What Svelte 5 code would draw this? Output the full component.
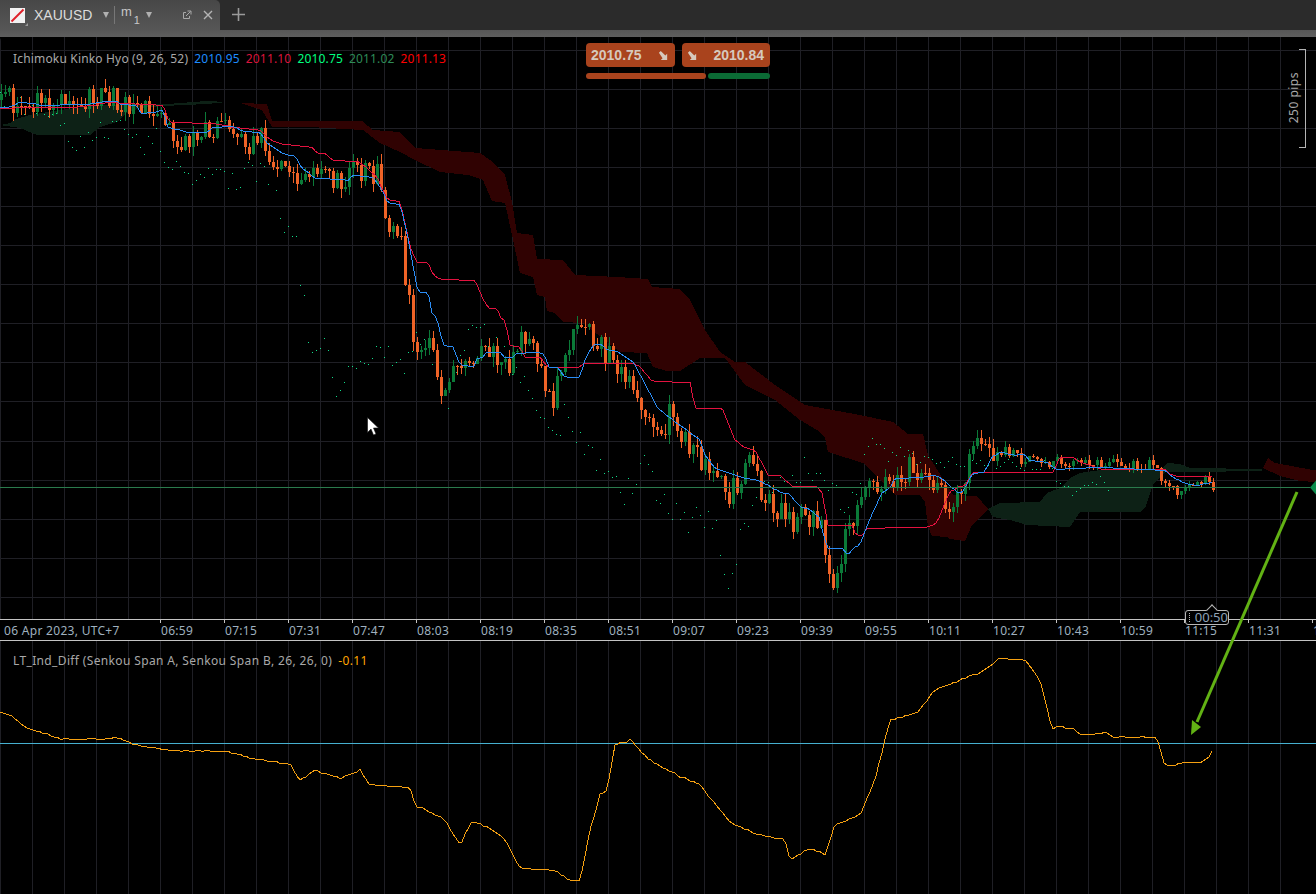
<script>
  // all chart coordinates are page pixels, panels shift them with a translate
  const CHART_TOP = 37;
  const SUB_TOP = 641;

  const closeKeys = [[0,100],[40,105],[70,103],[100,98],[130,105],[165,115],[170,148],[190,140],[200,125],[225,125],[245,145],[262,130],[265,160],[285,172],[318,180],[345,175],[375,172],[382,205],[390,235],[400,245],[408,300],[413,345],[430,350],[440,385],[455,360],[475,365],[490,345],[505,370],[520,330],[540,370],[552,400],[565,350],[585,325],[600,350],[620,365],[640,410],[655,440],[670,410],[690,455],[710,470],[730,495],[745,460],[765,500],[785,520],[820,515],[827,570],[832,590],[845,530],[865,495],[890,480],[910,465],[930,480],[950,505],[965,470],[975,445],[1000,452],[1030,462],[1060,462],[1100,465],[1150,465],[1175,490],[1195,488],[1205,475],[1212,488]];

  const kijun = [[0,108],[13,108],[20,107],[77,107],[100,104],[107,102],[163,105],[166,113],[169,122],[213,123],[233,127],[260,130],[267,137],[277,143],[312,147],[317,153],[325,153],[332,160],[357,161],[367,168],[377,177],[383,190],[388,200],[399,201],[403,213],[410,247],[417,262],[428,262],[433,275],[440,279],[475,280],[482,297],[488,308],[497,308],[501,318],[505,320],[510,345],[520,347],[525,357],[540,357],[548,367],[580,367],[584,363],[633,363],[640,367],[652,381],[690,382],[695,408],[722,408],[735,440],[745,448],[755,450],[768,475],[780,475],[792,486],[817,486],[822,493],[828,525],[852,525],[855,533],[862,537],[867,528],[908,527],[928,527],[937,523],[943,507],[950,492],[960,486],[965,486],[973,472],[1053,472],[1060,457],[1073,457],[1080,462],[1100,469],[1165,469],[1170,474],[1178,476],[1213,476]];

  const tenkan = [[0,107],[10,107],[20,102],[33,103],[40,105],[53,105],[67,104],[87,104],[107,101],[118,101],[120,104],[137,105],[140,113],[157,112],[163,110],[168,127],[187,132],[208,132],[213,127],[233,126],[243,131],[260,132],[267,143],[283,154],[295,156],[302,168],[315,178],[342,179],[348,181],[353,175],[373,177],[382,190],[388,203],[400,204],[407,233],[417,287],[420,292],[428,292],[432,313],[437,318],[443,345],[453,347],[460,365],[474,366],[477,359],[482,358],[487,352],[500,352],[504,357],[513,357],[517,353],[538,352],[545,355],[548,367],[557,367],[565,377],[580,377],[584,362],[593,345],[600,344],[608,350],[617,351],[633,362],[643,380],[657,407],[670,418],[680,425],[700,440],[705,455],[715,468],[735,475],[745,478],[758,480],[780,492],[790,494],[800,507],[808,508],[820,518],[823,535],[828,548],[842,548],[848,555],[855,547],[860,545],[868,523],[882,493],[890,488],[895,478],[923,477],[933,475],[940,477],[957,492],[962,493],[973,473],[985,472],[992,456],[1003,452],[1013,455],[1025,454],[1028,460],[1047,462],[1055,469],[1100,467],[1165,470],[1172,477],[1185,483],[1198,486],[1205,483],[1213,482]];

  const redCloud = [[240,103],[267,104],[272,121],[362,121],[373,130],[400,132],[415,148],[480,153],[490,160],[505,175],[512,202],[517,233],[533,235],[537,259],[563,260],[575,275],[617,277],[648,279],[652,287],[680,289],[690,300],[705,330],[720,352],[735,362],[745,362],[775,385],[805,405],[860,415],[893,422],[908,434],[923,434],[928,455],[953,495],[977,496],[988,509],[972,525],[965,541],[950,539],[947,537],[932,536],[928,527],[925,502],[920,495],[895,495],[863,463],[847,458],[828,452],[825,437],[817,430],[800,420],[775,400],[745,385],[725,358],[700,358],[680,371],[667,371],[653,367],[647,353],[620,352],[607,342],[583,323],[563,322],[555,313],[547,311],[545,297],[537,295],[533,277],[520,273],[512,235],[505,203],[492,201],[483,180],[468,175],[440,172],[415,160],[400,152],[380,143],[363,130],[310,127],[272,127],[262,110]];
  const redTail = [[1263,468],[1268,458],[1275,463],[1313,470],[1316,470],[1316,482],[1300,481],[1280,476]];
  const greenCloudA = [[0,125],[10,123],[13,120],[30,115],[60,110],[100,105],[167,104],[207,101],[227,102],[207,104],[163,106],[140,108],[127,113],[117,122],[100,127],[90,135],[37,135],[20,128]];
  const greenCloudB = [[988,509],[1000,503],[1040,502],[1047,493],[1060,488],[1072,477],[1080,473],[1100,470],[1160,470],[1167,463],[1180,464],[1190,468],[1262,469],[1262,471],[1190,472],[1165,472],[1153,485],[1145,508],[1140,512],[1080,512],[1070,527],[1027,525],[1010,520],[993,517]];

  const diff = [[0,712],[10,715],[25,728],[45,733],[62,739],[120,738],[135,745],[170,750],[230,752],[250,758],[290,764],[300,780],[315,770],[340,778],[360,770],[370,785],[410,787],[415,805],[445,820],[460,845],[472,820],[490,828],[505,840],[520,868],[555,870],[570,880],[580,880],[590,830],[600,795],[607,790],[615,745],[630,740],[650,760],[670,772],[700,785],[730,822],[760,835],[785,840],[790,860],[810,848],[825,855],[835,825],[860,815],[875,780],[890,720],[918,712],[935,690],[960,680],[985,670],[1000,658],[1025,660],[1040,680],[1050,720],[1053,729],[1061,726],[1065,728],[1074,729],[1080,734],[1087,735],[1098,734],[1104,732],[1112,737],[1147,737],[1157,738],[1164,763],[1175,767],[1180,762],[1198,762],[1201,764],[1204,759],[1208,759],[1213,750]];

  const timeLabels = ['06:59','07:15','07:31','07:47','08:03','08:19','08:35','08:51','09:07','09:23','09:39','09:55','10:11','10:27','10:43','10:59','11:15','11:31','11:47'];

  const pts = (list) => list.map((p) => p.join(',')).join(' ');

  function valueAt(keys, x) {
    for (let i = 1; i < keys.length; i++) {
      if (x <= keys[i][0]) {
        const [x0, y0] = keys[i - 1];
        const [x1, y1] = keys[i];
        return y0 + ((y1 - y0) * (x - x0)) / (x1 - x0);
      }
    }
    return keys[keys.length - 1][1];
  }

  let seed = 41;
  function rnd() {
    seed = (seed * 1664525 + 1013904223) % 4294967296;
    return seed / 4294967296;
  }

  // the indicators are stepped in the terminal, resample them onto whole pixels
  function stepped(keys, jitter = 0) {
    const out = [];
    const last = keys[keys.length - 1][0];
    for (let x = keys[0][0]; x <= last; x += 3) {
      out.push([x, Math.round(valueAt(keys, x) + (rnd() - 0.5) * jitter)]);
    }
    return out;
  }

  const candles = [];
  let prev = closeKeys[0][1];
  for (let x = 0; x <= 1212; x += 4) {
    const calm = x > 1010;
    const noise = calm ? 12 : 26;
    const close = Math.round(valueAt(closeKeys, x) + (rnd() - 0.5) * noise);
    const top = Math.min(prev, close);
    const bottom = Math.max(prev, close);
    candles.push({
      x,
      close,
      up: close < prev,
      top,
      height: Math.max(bottom - top, 1),
      high: top - Math.round(rnd() * (calm ? 5 : 10)),
      low: bottom + Math.round(rnd() * (calm ? 5 : 10))
    });
    prev = close;
  }

  const hLines = Array.from({ length: 15 }, (_, i) => Math.round(49.5 + i * 39.1));
  const vLines = Array.from({ length: 41 }, (_, i) => i * 32);
</script>

<div class="page">
  <header class="tabbar">
    <div class="tab">
      <svg class="symbol" width="18" height="18" viewBox="0 0 18 18">
        <rect x="0" y="0" width="15" height="15" fill="#f2f2f2" />
        <path d="M1.5 13.5 L13.5 1.5" stroke="#e0202a" stroke-width="2" />
        <path d="M18 15v3h-3z" fill="#9a9a9a" />
      </svg>
      <span class="symbol-name">XAUUSD</span>
      <span class="caret"></span>
      <span class="tab-sep"></span>
      <span class="period">m<sub>1</sub></span>
      <span class="caret period-caret"></span>
      <svg class="popout" width="10" height="10" viewBox="0 0 10 10" fill="none" stroke="#a8a8a8">
        <path d="M4 2.5H1.5v6h6V6" />
        <path d="M4 6 8.5 1.5M5.5 1h3.5v3.5" />
      </svg>
      <svg class="close" width="10" height="10" viewBox="0 0 10 10" stroke="#b4b4b4" stroke-width="1.4">
        <path d="M1 1l8 8M9 1l-8 8" />
      </svg>
    </div>
    <svg class="add" width="15" height="15" viewBox="0 0 15 15" stroke="#9a9a9a" stroke-width="1.6">
      <path d="M7.5 1v13M1 7.5h13" />
    </svg>
  </header>
  <div class="strip"></div>

  <section class="chart">
    <svg class="canvas" viewBox="0 {CHART_TOP} 1316 582">
      <g shape-rendering="crispEdges" stroke="#1f1f25">
        {#each hLines as y}
          <line x1="0" x2="1316" y1={y + 0.5} y2={y + 0.5} />
        {/each}
        {#each vLines as x}
          <line x1={x + 0.5} x2={x + 0.5} y1={CHART_TOP} y2="619" />
        {/each}
      </g>

      <polygon points={pts(greenCloudA)} fill="#0d2116" shape-rendering="crispEdges" />
      <polygon points={pts(greenCloudB)} fill="#0d2116" shape-rendering="crispEdges" />
      <polygon points={pts(redCloud)} fill="#300202" shape-rendering="crispEdges" />
      <polygon points={pts(redTail)} fill="#300202" shape-rendering="crispEdges" />

      <g fill="#0fe08c">
        {#each candles as c}
          <rect x={c.x - 104} y={c.close} width="1" height="1" />
        {/each}
      </g>

      <g shape-rendering="crispEdges">
        {#each candles as c}
          <rect x={c.x + 1} y={c.high} width="1" height={c.low - c.high} fill={c.up ? '#0b7a38' : '#ef6327'} />
          <rect x={c.x} y={c.top} width="3" height={c.height} fill={c.up ? '#0b7a38' : '#ef6327'} />
        {/each}
      </g>

      <polyline points={pts(stepped(kijun))} fill="none" stroke="#e2123f" shape-rendering="crispEdges" />
      <polyline points={pts(stepped(tenkan))} fill="none" stroke="#2b8df5" shape-rendering="crispEdges" />

      <line x1="0" x2="1310" y1="487.5" y2="487.5" stroke="#2a7a4c" shape-rendering="crispEdges" />
      <path d="M1310 487.5l6-7v14z" fill="#0b8a4b" />
    </svg>

    <div class="legend">
      <span>Ichimoku Kinko Hyo (9, 26, 52)</span>
      <span class="blue">2010.95</span>
      <span class="crimson">2011.10</span>
      <span class="mint">2010.75</span>
      <span class="green">2011.02</span>
      <span class="red">2011.13</span>
    </div>

    <div class="quote">
      <div class="quote-buttons">
        <div class="quote-btn">
          <span>2010.75</span>
          <svg width="11" height="11" viewBox="0 0 12 12" fill="#d6c9bd"><path d="M1 3l2-2 5 5 2-2v7H3l2-2z" /></svg>
        </div>
        <div class="quote-btn">
          <svg width="11" height="11" viewBox="0 0 12 12" fill="#d6c9bd"><path d="M1 3l2-2 5 5 2-2v7H3l2-2z" /></svg>
          <span>2010.84</span>
        </div>
      </div>
      <div class="quote-bars">
        <span class="bar sell"></span>
        <span class="bar buy"></span>
      </div>
    </div>

    <div class="pips">
      <span class="pips-label">250 pips</span>
      <span class="pips-bracket"></span>
    </div>
  </section>

  <div class="axis">
    <div class="axis-date">06 Apr 2023, UTC+7</div>
    {#each timeLabels as t}
      <div class="axis-cell">{t}</div>
    {/each}
    <div class="countdown">
      <span class="grip"></span>
      <span class="countdown-time">00:50</span>
    </div>
  </div>

  <section class="sub">
    <svg class="canvas" viewBox="0 {SUB_TOP} 1316 253">
      <g shape-rendering="crispEdges" stroke="#1f1f25">
        {#each vLines as x}
          <line x1={x + 0.5} x2={x + 0.5} y1={SUB_TOP} y2="894" />
        {/each}
      </g>
      <line x1="0" x2="1316" y1="743.5" y2="743.5" stroke="#46b0d0" shape-rendering="crispEdges" />
      <polyline points={pts(stepped(diff, 1.6))} fill="none" stroke="#f5a011" shape-rendering="crispEdges" />
    </svg>
    <div class="legend sub-legend">
      <span>LT_Ind_Diff (Senkou Span A, Senkou Span B, 26, 26, 0)</span>
      <span class="amber">-0.11</span>
    </div>
  </section>

  <svg class="overlay" viewBox="0 0 1316 894">
    <path d="M1297 492 1197 722" stroke="#62b214" stroke-width="3" fill="none" />
    <path d="M1191 735l1-15 9 7z" fill="#62b214" />
    <path d="M367.5 417.5v15l3.5-3.5 2.5 6 2.5-1-2.5-6h5z" fill="#fff" stroke="#111" stroke-width="0.6" />
  </svg>
</div>

<style>
  :global(body) {
    background: #000;
  }

  .page {
    position: relative;
    display: flex;
    flex-direction: column;
    width: 1316px;
    height: 894px;
    overflow: hidden;
    background: #000;
    font-family: "Noto Sans", "Open Sans", sans-serif;
    font-size: 12px;
    color: #a8a8a8;
  }

  .tabbar {
    display: flex;
    align-items: flex-start;
    height: 30px;
    background: #2b2b2b;
  }

  .tab {
    display: flex;
    align-items: center;
    width: 220px;
    height: 30px;
    flex-shrink: 0;
    padding-left: 10px;
    box-sizing: border-box;
    background: linear-gradient(#474747, #565656);
    border-top-right-radius: 5px;
  }

  .symbol {
    flex-shrink: 0;
    margin-top: 4px;
  }

  .symbol-name {
    margin-left: 6px;
    width: 69px;
    font-size: 14px;
    color: #dcdcdc;
    font-family: "Liberation Sans", sans-serif;
  }

  .caret {
    width: 0;
    height: 0;
    border-left: 3.5px solid transparent;
    border-right: 3.5px solid transparent;
    border-top: 6px solid #b0b0b0;
  }

  .tab-sep {
    width: 1px;
    height: 18px;
    margin: 0 6px 0 5px;
    background: #777;
  }

  .period {
    font-size: 13px;
    color: #c8c8c8;
    margin-top: -6px;
    font-family: "Liberation Sans", sans-serif;
  }

  .period sub {
    font-size: 11px;
    margin-left: 2px;
    vertical-align: -8px;
    line-height: 0;
  }

  .period-caret {
    margin-left: 6px;
  }

  .popout {
    margin-left: 30px;
  }

  .close {
    margin-left: 11px;
  }

  .add {
    margin: 7px 0 0 11px;
  }

  .strip {
    height: 7px;
    background: linear-gradient(#565656, #5e5e5e);
  }

  .chart {
    position: relative;
    height: 582px;
    flex-shrink: 0;
    border-top-left-radius: 4px;
    overflow: hidden;
  }

  .sub {
    position: relative;
    flex: 1;
  }

  .canvas {
    display: block;
    width: 100%;
    height: 100%;
  }

  .legend {
    position: absolute;
    left: 13px;
    top: 13px;
    display: flex;
    gap: 6px;
    line-height: 17px;
    letter-spacing: 0.17px;
    white-space: nowrap;
  }

  .sub-legend {
    top: 11px;
    letter-spacing: 0.36px;
  }

  .blue { color: #1e8cff; }
  .crimson { color: #dc143c; }
  .mint { color: #00ff7f; }
  .green { color: #2e8b57; }
  .red { color: #ff0000; }
  .amber { color: #ffa500; }

  .quote {
    position: absolute;
    left: 586px;
    top: 6px;
    width: 184px;
    display: flex;
    flex-direction: column;
    gap: 6px;
  }

  .quote-buttons {
    display: flex;
    gap: 7px;
  }

  .quote-btn {
    flex: 1;
    display: flex;
    align-items: center;
    justify-content: space-between;
    height: 24px;
    padding: 0 6px 0 5px;
    background: #a9431d;
    border-radius: 4px;
    font-family: "Liberation Sans", sans-serif;
    font-size: 14px;
    font-weight: 700;
    color: #d6c9bd;
  }

  .quote-bars {
    display: flex;
    gap: 2px;
  }

  .bar {
    height: 6px;
    border-radius: 3px;
  }

  .sell {
    width: 120px;
    background: #a9431d;
  }

  .buy {
    flex: 1;
    background: #0b6b35;
  }

  .pips {
    position: absolute;
    top: 12px;
    right: 10px;
    display: flex;
    align-items: center;
    height: 98px;
  }

  .pips-label {
    margin-right: -3px;
    writing-mode: vertical-rl;
    transform: rotate(180deg);
    letter-spacing: 0.5px;
    color: #a8a8a8;
  }

  .pips-bracket {
    width: 6px;
    height: 97px;
    border: 1px solid #b4b4b4;
    border-left: 0;
  }

  .axis {
    position: relative;
    display: flex;
    height: 22px;
    flex-shrink: 0;
    box-sizing: border-box;
    border-top: 1px solid #c4c4c4;
    border-bottom: 1px solid #c4c4c4;
    line-height: 22px;
    letter-spacing: 0.3px;
    color: #9fb0bf;
    white-space: nowrap;
  }

  .axis-date {
    width: 160px;
    flex-shrink: 0;
    padding-left: 4px;
    box-sizing: border-box;
  }

  .axis-cell {
    position: relative;
    width: 64px;
    flex-shrink: 0;
    padding-left: 1px;
    box-sizing: border-box;
  }

  .axis-cell::before {
    content: "";
    position: absolute;
    left: 0;
    top: 0;
    width: 1px;
    height: 3px;
    background: #c4c4c4;
  }

  .countdown {
    position: absolute;
    left: 1185px;
    top: -10px;
    display: flex;
    align-items: center;
    width: 44px;
    height: 15px;
    box-sizing: border-box;
    padding-left: 3px;
    background: #000;
    border: 1px solid #b8b8b8;
    border-radius: 3px;
    color: #8fa3b8;
  }

  .countdown::before {
    content: "";
    position: absolute;
    left: 22px;
    top: -5px;
    width: 7px;
    height: 7px;
    background: #000;
    border-top: 1px solid #b8b8b8;
    border-left: 1px solid #b8b8b8;
    transform: rotate(45deg);
  }

  .grip {
    width: 3px;
    height: 9px;
    background: repeating-linear-gradient(#b8b8b8 0 1px, transparent 1px 2px);
  }

  .countdown-time {
    margin-left: 5px;
    font-size: 13px;
    line-height: 13px;
    letter-spacing: 0;
  }

  .overlay {
    position: absolute;
    inset: 0;
    width: 100%;
    height: 100%;
    pointer-events: none;
  }
</style>
